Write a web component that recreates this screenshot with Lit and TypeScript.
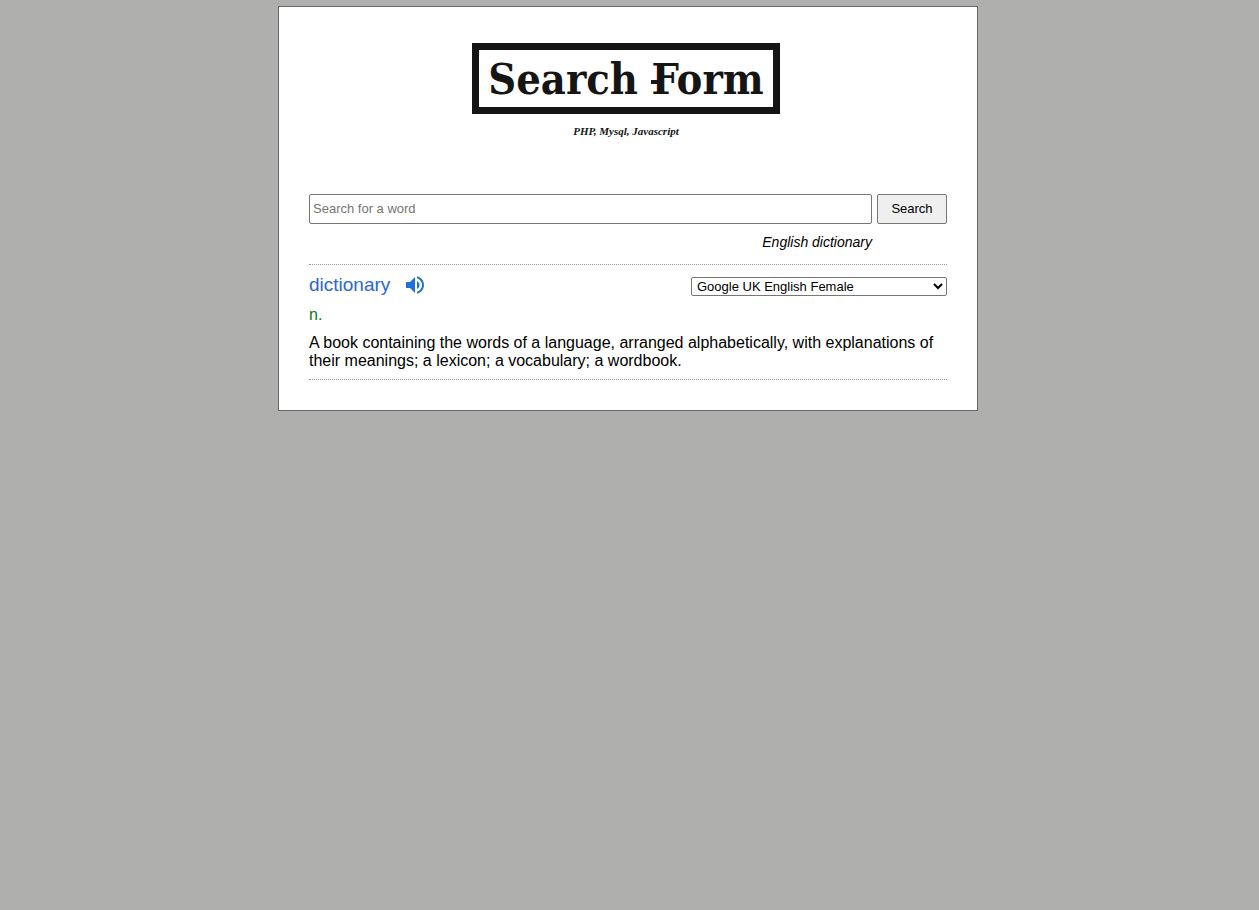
import { LitElement, html, css } from "lit";
import { customElement, state } from "lit/decorators.js";

@customElement("site-logo")
class SiteLogo extends LitElement {
  static styles = css`
    :host {
      display: flex;
      flex-direction: column;
      align-items: center;
      color: #151515;
    }
    .name {
      box-sizing: border-box;
      width: 308px;
      margin: 0;
      padding-top: 2px;
      border: 7px solid #151515;
      font: bold 43px/55px "DejaVu Serif Condensed", "DejaVu Serif", serif;
      text-align: center;
      white-space: nowrap;
    }
    .initial {
      position: relative;
    }
    .initial::before {
      content: "";
      position: absolute;
      left: 0;
      top: 26px;
      width: 8px;
      height: 4px;
      background: #151515;
    }
    .tagline {
      margin: 9px 0 0;
      font: italic bold 11px/16px "Liberation Serif", serif;
    }
  `;
  render() {
    return html`
      <h1 class="name">Search <span class="initial">F</span>orm</h1>
      <p class="tagline">PHP, Mysql, Javascript</p>
    `;
  }
}

@customElement("app-root")
class AppRoot extends LitElement {
  @state() private word = "";

  static styles = css`
    :host {
      display: block;
      box-sizing: border-box;
      min-height: 100vh;
      padding: 6px 3px 6px 0;
      background: #afafad;
      color: #000;
      font: 16px/18px "Liberation Sans", Arial, sans-serif;
    }
    .card {
      box-sizing: border-box;
      max-width: 700px;
      margin: 0 auto;
      padding: 36px 30px 30px;
      border: 1px solid #666;
      background: #fff;
    }
    .logo {
      margin: 0 4px 55px 0;
    }
    .search {
      display: grid;
      grid-template-columns: 1fr 70px;
      column-gap: 5px;
      row-gap: 10px;
      padding-bottom: 13px;
      border-bottom: 1px dotted #999;
    }
    .field,
    .submit {
      box-sizing: border-box;
      height: 30px;
      margin: 0;
      border: 1px solid #767676;
      border-radius: 2px;
      font: 13px "Liberation Sans", Arial, sans-serif;
      color: #000;
    }
    .field {
      min-width: 0;
      padding: 0 3px 2px;
      background: #fff;
    }
    .field::placeholder {
      color: #757575;
    }
    .submit {
      padding: 0 0 2px;
      background: #efefef;
    }
    .source {
      font-size: 14px;
      line-height: 17px;
      font-style: italic;
      text-align: right;
    }
    .entry {
      padding-bottom: 9px;
      border-bottom: 1px dotted #999;
    }
    .head {
      display: flex;
      align-items: center;
      padding-top: 8px;
    }
    .word {
      margin: 0;
      font-size: 19px;
      line-height: 22px;
      font-weight: normal;
      color: #2b66d4;
    }
    .speak {
      display: flex;
      margin: 0 auto 0 13px;
      padding: 0;
      border: 0;
      background: none;
      color: #1f6fd8;
    }
    .voice {
      width: 256px;
      height: 19px;
      margin-top: 3px;
      padding: 0 1px;
      border: 1px solid #767676;
      border-radius: 2px;
      background: #fff;
      font: 13px "Liberation Sans", Arial, sans-serif;
      color: #000;
    }
    .kind {
      margin: 9px 0 10px;
      color: #087a1c;
    }
    .meaning {
      margin: 0;
    }
  `;

  private onInput(e: Event) {
    this.word = (e.target as HTMLInputElement).value;
  }

  render() {
    return html`
      <main class="card">
        <site-logo class="logo"></site-logo>
        <form class="search" @submit=${(e: Event) => e.preventDefault()}>
          <input
            class="field"
            type="text"
            aria-label="Search for a word"
            placeholder="Search for a word"
            .value=${this.word}
            @input=${this.onInput}
          />
          <button class="submit" type="submit">Search</button>
          <span class="source">English dictionary</span>
        </form>
        <article class="entry">
          <div class="head">
            <h2 class="word">dictionary</h2>
            <button class="speak" type="button" aria-label="Listen">
              <svg width="24" height="24" viewBox="0 0 24 24" fill="currentColor" aria-hidden="true">
                <path
                  d="M3 9v6h4l5 5V4L7 9H3zm13.5 3c0-1.77-1.02-3.29-2.5-4.03v8.05c1.48-.73 2.5-2.25 2.5-4.02zM14 3.23v2.06c2.89.86 5 3.54 5 6.71s-2.11 5.85-5 6.71v2.06c4.01-.91 7-4.49 7-8.77s-2.99-7.86-7-8.77z"
                />
              </svg>
            </button>
            <select class="voice" aria-label="Voice">
              <option>Google UK English Female</option>
            </select>
          </div>
          <p class="kind">n.</p>
          <p class="meaning">
            A book containing the words of a language, arranged alphabetically, with explanations of
            their meanings; a lexicon; a vocabulary; a wordbook.
          </p>
        </article>
      </main>
    `;
  }
}
